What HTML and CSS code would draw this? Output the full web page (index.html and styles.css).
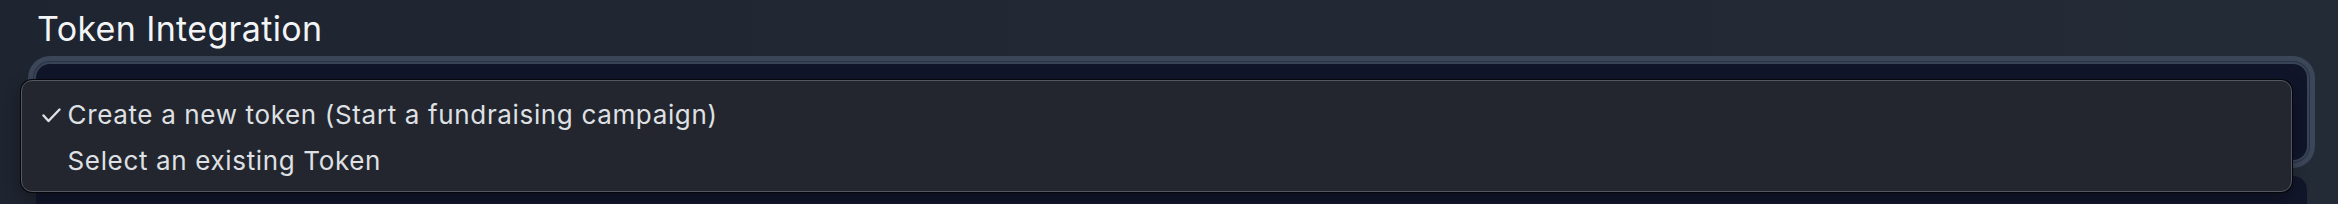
FILE: index.html
```html
<!DOCTYPE html>
<html lang="en">

<head>
    <meta charset="UTF-8">
    <meta name="viewport" content="width=device-width, initial-scale=1.0">
    <title>Token Integration</title>
    <link rel="stylesheet" href="styles.css">
</head>

<body>
    <div class="field">
        <h2 class="field-label">Token Integration</h2>
        <div class="select-wrap">
            <div class="select"></div>
            <ul class="menu">
                <li class="menu-item selected">
                    <span class="check">
                        <svg width="19" height="15" viewBox="0 0 19 15">
                            <polyline points="1.5,7.5 6.5,13 17.5,1.5" fill="none" stroke="#dfe0e3" stroke-width="2.4" stroke-linecap="round" stroke-linejoin="round"/>
                        </svg>
                    </span>
                    Create a new token (Start a fundraising campaign)
                </li>
                <li class="menu-item">
                    <span class="check"></span>
                    Select an existing Token
                </li>
            </ul>
        </div>
        <div class="next-field"></div>
    </div>
</body>

</html>
```

FILE: styles.css
```css
* {
    margin: 0;
    padding: 0;
    box-sizing: border-box;
}

body {
    font-family: 'Inter', 'Noto Sans', sans-serif;
    background: linear-gradient(to right, #1e2430, #212834 40%, #232b37);
    height: 100vh;
    overflow: hidden;
}

.field {
    padding: 9px 31px 0 36px;
}

.field-label {
    color: #f3f4f6;
    font-size: 34px;
    font-weight: 400;
    line-height: 40px;
    letter-spacing: 0.35px;
    padding-left: 1px;
    margin-bottom: 15px;
}

.select-wrap {
    position: relative;
}

.select {
    height: 96px;
    background-color: #10152a;
    border-radius: 14px;
    box-shadow: 0 0 0 2px #3a4458, 0 0 0 3px #2a3244, 0 0 0 8px #3b4659;
}

.menu {
    position: absolute;
    top: 16px;
    left: -15px;
    width: 100%;
    height: 112px;
    list-style: none;
    padding: 10px 0;
    background-color: #23262f;
    border: 1.5px solid #55585f;
    border-radius: 11px;
    box-shadow: 0 0 0 1px #05070b, 0 6px 16px rgba(0, 0, 0, 0.35);
    z-index: 2;
}

.menu-item {
    display: flex;
    align-items: center;
    height: 46px;
    padding-left: 19.5px;
    color: #dfe0e3;
    font-size: 26px;
    letter-spacing: 0.65px;
}

.check {
    width: 26px;
    display: flex;
    align-items: center;
    padding-top: 3px;
}

.next-field {
    margin-top: 16px;
    height: 28px;
    background-color: #11162a;
    border-radius: 14px 14px 0 0;
}
```
